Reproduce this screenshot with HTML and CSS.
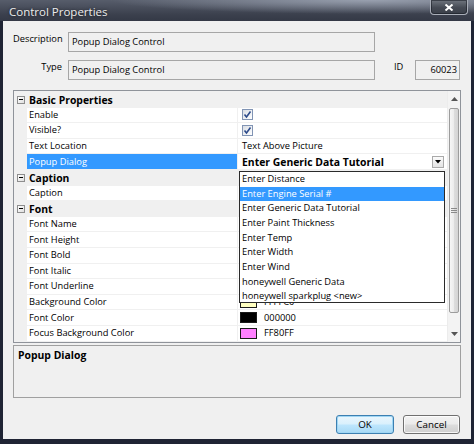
FILE: index.html
```html
<!DOCTYPE html>
<html>
<head>
<meta charset="utf-8">
<link rel="stylesheet" href="styles.css">
</head>
<body>
<div class="window">
  <div class="titlebar">
    <span class="title">Control Properties</span>
    <div class="close"><svg width="10" height="7" viewBox="0 0 10 7"><path d="M1.5 0.5 L8.5 6.5 M8.5 0.5 L1.5 6.5" stroke="#fff" stroke-width="2" fill="none"/></svg></div>
  </div>
  <div class="frame">
    <div class="client">
      <div class="field-row">
        <span class="lbl">Description</span>
        <div class="tb tb-wide">Popup Dialog Control</div>
      </div>
      <div class="field-row second">
        <span class="lbl">Type</span>
        <div class="tb tb-wide">Popup Dialog Control</div>
        <span class="lbl-id">ID</span>
        <div class="tb tb-id">60023</div>
      </div>

      <div class="pgrid">
        <div class="rows">
          <div class="row cat"><span class="gut"><span class="minus"></span></span><span class="cat-name">Basic Properties</span></div>
          <div class="row"><span class="gut"></span><span class="name">Enable</span><span class="val"><span class="chk"><svg width="9" height="9" viewBox="0 0 9 9"><path d="M1.5 4.5 L3.5 7 L7.5 1.5" stroke="#2c4a8a" stroke-width="1.6" fill="none"/></svg></span></span></div>
          <div class="row"><span class="gut"></span><span class="name">Visible?</span><span class="val"><span class="chk"><svg width="9" height="9" viewBox="0 0 9 9"><path d="M1.5 4.5 L3.5 7 L7.5 1.5" stroke="#2c4a8a" stroke-width="1.6" fill="none"/></svg></span></span></div>
          <div class="row"><span class="gut"></span><span class="name">Text Location</span><span class="val">Text Above Picture</span></div>
          <div class="row sel"><span class="gut"></span><span class="name">Popup Dialog</span><span class="val bold-val"><span class="vtext">Enter Generic Data Tutorial</span><span class="ddbtn"><svg width="6" height="4" viewBox="0 0 6 4"><path d="M0 0 L6 0 L3 3.5 Z" fill="#000"/></svg></span></span></div>
          <div class="row cat"><span class="gut"><span class="minus"></span></span><span class="cat-name">Caption</span></div>
          <div class="row"><span class="gut"></span><span class="name">Caption</span><span class="val"></span></div>
          <div class="row cat"><span class="gut"><span class="minus"></span></span><span class="cat-name">Font</span></div>
          <div class="row"><span class="gut"></span><span class="name">Font Name</span><span class="val"></span></div>
          <div class="row"><span class="gut"></span><span class="name">Font Height</span><span class="val"></span></div>
          <div class="row"><span class="gut"></span><span class="name">Font Bold</span><span class="val"></span></div>
          <div class="row"><span class="gut"></span><span class="name">Font Italic</span><span class="val"></span></div>
          <div class="row"><span class="gut"></span><span class="name">Font Underline</span><span class="val"></span></div>
          <div class="row"><span class="gut"></span><span class="name">Background Color</span><span class="val"><span class="sw sw-yellow"></span><span class="swtext">FFFFC0</span></span></div>
          <div class="row"><span class="gut"></span><span class="name">Font Color</span><span class="val"><span class="sw sw-black"></span><span class="swtext">000000</span></span></div>
          <div class="row"><span class="gut"></span><span class="name">Focus Background Color</span><span class="val"><span class="sw sw-pink"></span><span class="swtext">FF80FF</span></span></div>
        </div>
        <div class="vscroll">
          <div class="sbtn"><svg width="7" height="4" viewBox="0 0 7 4"><path d="M0 4 L3.5 0 L7 4 Z" fill="#555"/></svg></div>
          <div class="thumb"><svg width="6" height="6" viewBox="0 0 6 6"><path d="M0 0.5 H6 M0 2.5 H6 M0 4.5 H6" stroke="#8a8a8a" stroke-width="1"/></svg></div>
          <div class="track"></div>
          <div class="sbtn"><svg width="7" height="4" viewBox="0 0 7 4"><path d="M0 0 L7 0 L3.5 4 Z" fill="#555"/></svg></div>
        </div>
        <div class="ddlist">
          <div class="item">Enter Distance</div>
          <div class="item hi">Enter Engine Serial #</div>
          <div class="item">Enter Generic Data Tutorial</div>
          <div class="item">Enter Paint Thickness</div>
          <div class="item">Enter Temp</div>
          <div class="item">Enter Width</div>
          <div class="item">Enter Wind</div>
          <div class="item">honeywell Generic Data</div>
          <div class="item">honeywell sparkplug &lt;new&gt;</div>
        </div>
      </div>

      <div class="help">
        <div class="help-title">Popup Dialog</div>
      </div>

      <div class="buttons">
        <button class="btn btn-ok">OK</button>
        <button class="btn">Cancel</button>
      </div>
    </div>
  </div>
</div>
</body>
</html>
```

FILE: styles.css
```css
* { box-sizing: border-box; }
html, body { margin: 0; padding: 0; }
body {
  width: 474px;
  height: 444px;
  overflow: hidden;
  background: #1f2434;
  font-family: "Open Sans", "Liberation Sans", sans-serif;
  font-size: 9.3px;
  color: #000;
}
.window {
  width: 474px;
  height: 444px;
  display: flex;
  flex-direction: column;
  background: #1f2434;
}
.titlebar {
  height: 21px;
  flex: none;
  display: flex;
  justify-content: space-between;
  align-items: flex-start;
  padding: 0 6px 0 9px;
  background:
    radial-gradient(ellipse 260px 14px at 78% 0%, rgba(175,183,198,0.75), rgba(175,183,198,0) 100%),
    linear-gradient(#575d6b, #3b404d 70%, #343946);
}
.title {
  font-size: 11.5px;
  line-height: 21px;
  padding-top: 1px;
  color: #ececec;
  text-shadow: 0 0 3px rgba(0,0,0,0.6);
}
.close {
  width: 38px;
  height: 15px;
  border: 1px solid #a9aeb8;
  border-top: none;
  border-radius: 0 0 4px 4px;
  background: linear-gradient(#70767f, #454a54 55%, #3a3f49);
  box-shadow: inset 0 0 0 1px rgba(20,24,32,0.55);
  display: flex;
  align-items: center;
  justify-content: center;
}
.frame {
  flex: 1;
  padding: 0 3px 5px 3px;
  display: flex;
}
.client {
  flex: 1;
  background: #f0f0f0;
  padding: 11px 10px 0 10px;
  display: flex;
  flex-direction: column;
}
.field-row {
  display: flex;
  align-items: flex-start;
  height: 20px;
}
.field-row.second { margin-top: 8px; }
.lbl {
  width: 49px;
  text-align: right;
  line-height: 13px;
  margin-right: 6px;
  white-space: nowrap;
}
.lbl-id {
  line-height: 13px;
  margin-left: 19px;
  width: 21px;
}
.tb {
  height: 20px;
  border: 1px solid #a6a6a6;
  background: #f0f0f0;
  line-height: 18px;
  white-space: nowrap;
}
.tb-wide { width: 307px; padding-left: 3px; }
.tb-id { width: 45px; text-align: right; padding-right: 2px; }

.pgrid {
  position: relative;
  margin-top: 10px;
  height: 253px;
  border: 1px solid #8f939a;
  background: #fff;
  display: flex;
}
.rows {
  width: 433px;
  padding-top: 1px;
  background: #f0f0f0;
}
.row {
  display: flex;
  height: 15.6px;
  line-height: 14px;
}
.gut {
  width: 13px;
  flex: none;
  background: #f0f0f0;
  display: flex;
  align-items: center;
}
.minus {
  width: 8px;
  height: 8px;
  margin-left: 3px;
  border: 1px solid #8e8e8e;
  background: linear-gradient(135deg, #ffffff, #dedede);
  position: relative;
}
.minus::after {
  content: "";
  position: absolute;
  left: 1px;
  top: 2.5px;
  width: 4px;
  height: 1px;
  background: #000;
}
.cat { background: #f0f0f0; }
.cat-name {
  font-weight: bold;
  font-size: 10.4px;
  padding-left: 2px;
  display: flex;
  align-items: center;
  white-space: nowrap;
}
.name {
  width: 211px;
  flex: none;
  padding-left: 2px;
  background: #fff;
  border-right: 1px solid #f0f0f0;
  border-bottom: 1px solid #f0f0f0;
  display: flex;
  align-items: center;
  white-space: nowrap;
}
.val {
  flex: 1;
  padding-left: 4px;
  background: #fff;
  border-bottom: 1px solid #f0f0f0;
  display: flex;
  align-items: center;
  white-space: nowrap;
}
.sel .name { background: #3399ff; color: #fff; }
.bold-val { font-weight: bold; font-size: 10.4px; justify-content: space-between; padding-right: 3px; }
.ddbtn {
  width: 12px;
  height: 12px;
  border: 1px solid #a9a9a9;
  background: linear-gradient(#fbfbfb, #e3e3e3);
  display: flex;
  align-items: center;
  justify-content: center;
}
.chk {
  width: 11px;
  height: 11px;
  border: 1px solid #8194b4;
  background: linear-gradient(135deg, #d8dde4, #ffffff);
  display: flex;
  align-items: center;
  justify-content: center;
}
.sw {
  width: 17px;
  height: 11px;
  margin-left: -2px;
  border: 1px solid #1a1a1a;
}
.sw-yellow { background: #ffffc0; }
.sw-black { background: #000; }
.sw-pink { background: #ff80ff; }
.swtext { margin-left: 7px; }

.vscroll {
  width: 13px;
  flex: none;
  display: flex;
  flex-direction: column;
  background: #f3f3f3;
  border-left: 1px solid #ececec;
}
.sbtn {
  height: 16px;
  display: flex;
  align-items: center;
  justify-content: center;
}
.thumb {
  height: 205px;
  margin: 1px 1px 0 1px;
  border: 1px solid #9c9c9c;
  border-radius: 2px;
  background: linear-gradient(to right, #f6f6f6, #ececec 45%, #dcdcdc 55%, #d4d4d4);
  display: flex;
  align-items: center;
  justify-content: center;
}
.track { flex: 1; }

.ddlist {
  position: absolute;
  left: 225px;
  top: 80px;
  width: 206px;
  height: 132px;
  border: 1px solid #2a2a2a;
  background: #fff;
  z-index: 2;
}
.item {
  height: 14.67px;
  line-height: 14.67px;
  padding-left: 2px;
  white-space: nowrap;
}
.item.hi { background: #3399ff; color: #fff; }

.help {
  margin-top: 2px;
  height: 53px;
  border: 1px solid #a0a0a0;
  background: #f0f0f0;
  padding: 3px 4px;
}
.help-title {
  font-weight: bold;
  font-size: 10.4px;
  line-height: 13px;
}
.buttons {
  margin-top: 17px;
  display: flex;
  justify-content: flex-end;
  gap: 9px;
  padding-right: 1px;
}
.btn {
  height: 19px;
  width: 57px;
  padding: 0;
  font-family: "Open Sans", "Liberation Sans", sans-serif;
  font-size: 9.8px;
  color: #000;
  border: 1px solid #707070;
  border-radius: 3px;
  background: linear-gradient(#f3f3f3, #ebebeb 48%, #dddddd 52%, #cfcfcf);
  box-shadow: inset 0 0 0 1px rgba(255,255,255,0.8);
}
.btn-ok {
  width: 58px;
  border-color: #3c7fb1;
  background: linear-gradient(#eaf6fd, #d9f0fc 48%, #bee6fd 52%, #a7d9f5);
  box-shadow: inset 0 0 0 1px #9fd6f4;
}
```
